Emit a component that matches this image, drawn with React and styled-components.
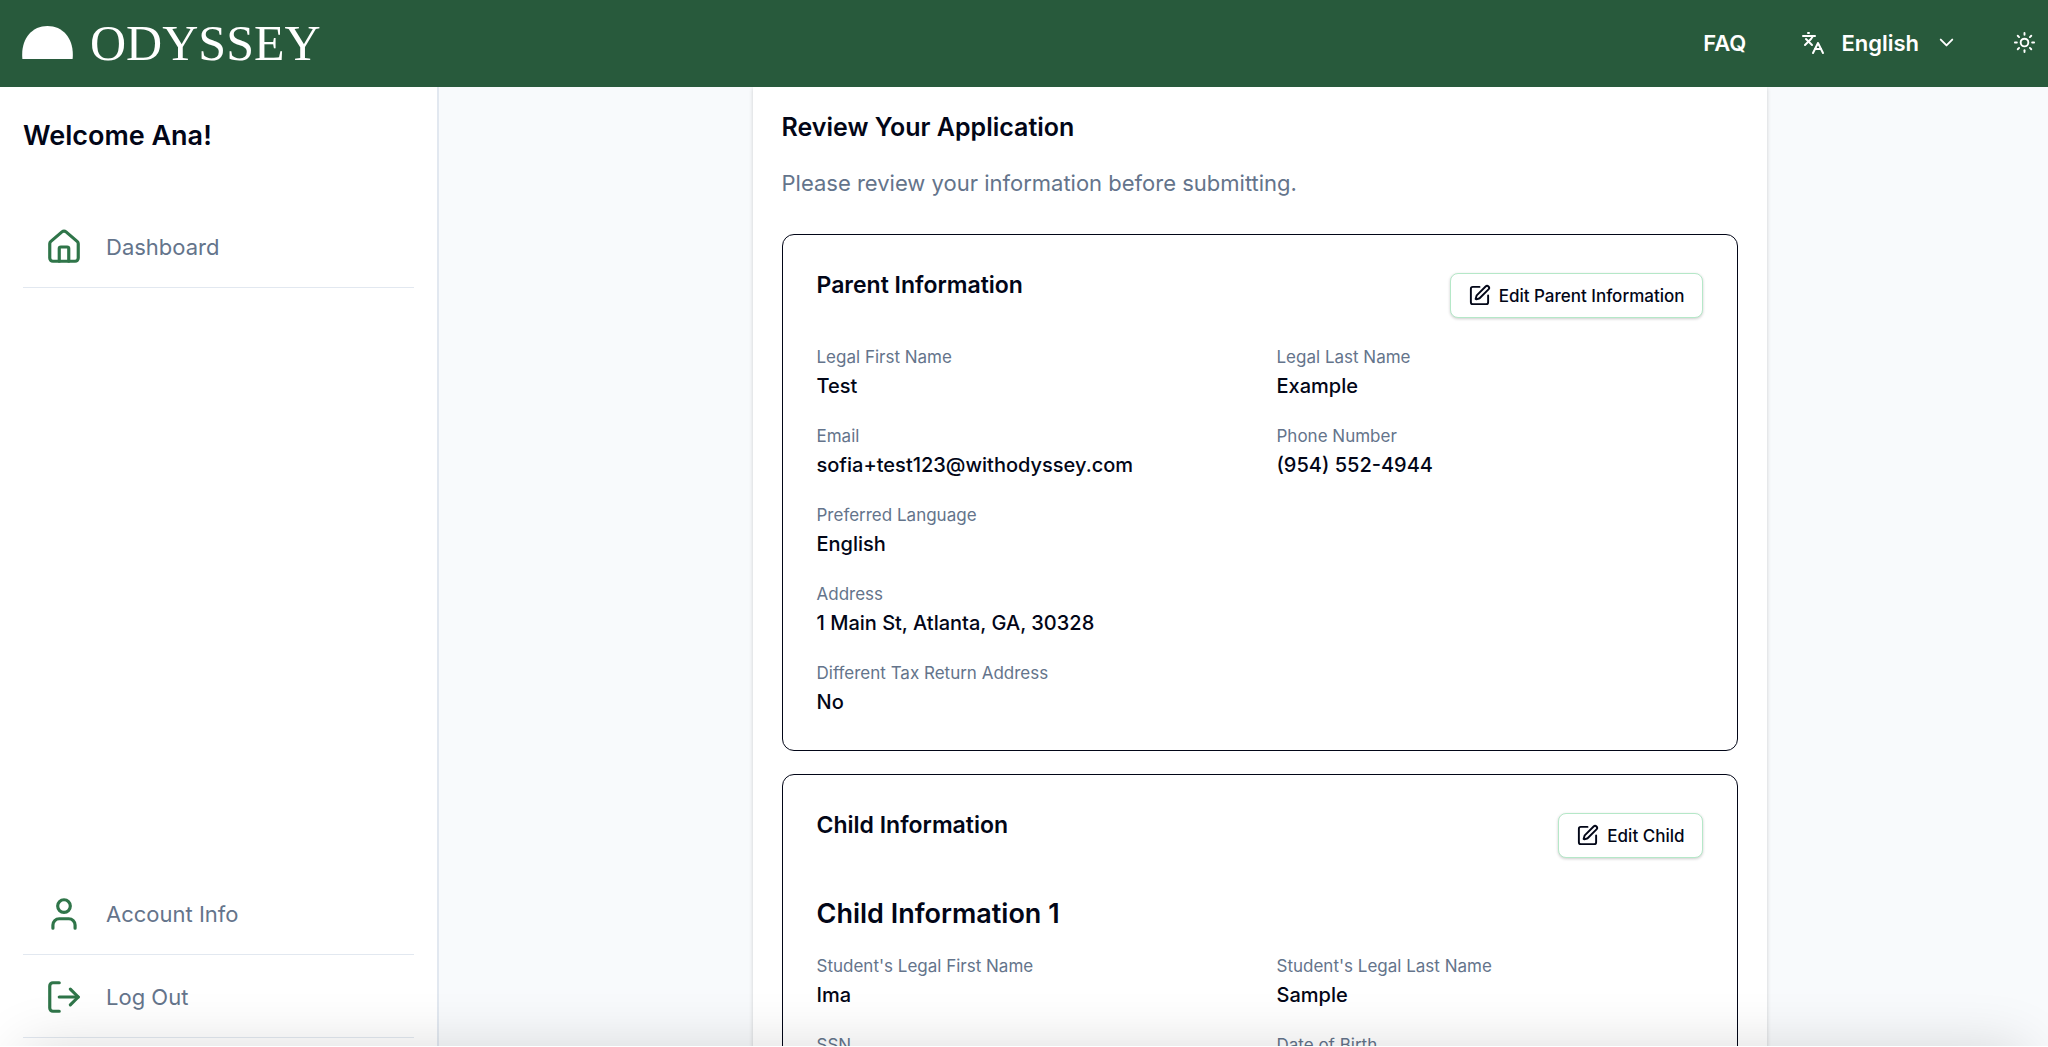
import React from "react";
import styled, { createGlobalStyle } from "styled-components";
import { House, User, LogOut, Languages, ChevronDown, Sun, SquarePen } from "lucide-react";

const GlobalStyle = createGlobalStyle`
  * {
    box-sizing: border-box;
  }

  body {
    margin: 0;
    overflow: hidden;
    background: #f8fafc;
    color: #020617;
    font-family: Inter, "Liberation Sans", sans-serif;
  }

  h1, h2, h3, p, dl, dd {
    margin: 0;
  }
`;

const parentFields = [
  [
    { label: "Legal First Name", value: "Test" },
    { label: "Legal Last Name", value: "Example" },
  ],
  [
    { label: "Email", value: "sofia+test123@withodyssey.com" },
    { label: "Phone Number", value: "(954) 552-4944" },
  ],
  [{ label: "Preferred Language", value: "English" }],
  [{ label: "Address", value: "1 Main St, Atlanta, GA, 30328" }],
  [{ label: "Different Tax Return Address", value: "No" }],
];

const childFields = [
  [
    { label: "Student's Legal First Name", value: "Ima" },
    { label: "Student's Legal Last Name", value: "Sample" },
  ],
  [{ label: "SSN" }, { label: "Date of Birth" }],
];

const Fields = ({ rows }) => (
  <FieldList>
    {rows.map((row) => (
      <FieldRow key={row[0].label}>
        {row.map((field) => (
          <div key={field.label}>
            <FieldLabel>{field.label}</FieldLabel>
            <FieldValue>{field.value}</FieldValue>
          </div>
        ))}
      </FieldRow>
    ))}
  </FieldList>
);

const NavItem = ({ icon: Icon, children }) => (
  <NavLink href="#">
    <Icon size={38} strokeWidth={2} color="#2f7549" />
    {children}
  </NavLink>
);

const App = () => {
  return (
    <Page>
      <GlobalStyle />
      <Header>
        <Logo href="#" aria-label="Odyssey">
          <svg width="51" height="33" viewBox="0 0 51 33" fill="#fff">
            <path d="M0.4 33C-1.500 14 9 0 25.500 0S52.500 14 50.600 33Z" />
          </svg>
          <LogoText>ODYSSEY</LogoText>
        </Logo>
        <HeaderNav>
          <HeaderLink href="#">FAQ</HeaderLink>
          <HeaderButton type="button">
            <Languages size={24} />
            English
            <ChevronDown size={23} strokeWidth={2} />
          </HeaderButton>
          <HeaderButton type="button" aria-label="Toggle theme">
            <Sun size={23} />
          </HeaderButton>
        </HeaderNav>
      </Header>

      <Body>
        <Sidebar>
          <Welcome>Welcome Ana!</Welcome>
          <SideNav>
            <NavItem icon={House}>Dashboard</NavItem>
          </SideNav>
          <SideNav>
            <NavItem icon={User}>Account Info</NavItem>
            <NavItem icon={LogOut}>Log Out</NavItem>
          </SideNav>
        </Sidebar>

        <Main>
          <Card>
            <Title>Review Your Application</Title>
            <Intro>Please review your information before submitting.</Intro>

            <Section>
              <SectionHeader>
                <SectionTitle>Parent Information</SectionTitle>
                <EditButton type="button">
                  <SquarePen size={23} />
                  Edit Parent Information
                </EditButton>
              </SectionHeader>
              <Fields rows={parentFields} />
            </Section>

            <Section>
              <SectionHeader>
                <SectionTitle>Child Information</SectionTitle>
                <EditButton type="button">
                  <SquarePen size={23} />
                  Edit Child
                </EditButton>
              </SectionHeader>
              <ChildTitle>Child Information 1</ChildTitle>
              <Fields rows={childFields} />
            </Section>
          </Card>
        </Main>
      </Body>
      <BottomBar />
    </Page>
  );
};

const Page = styled.div`
  display: flex;
  flex-direction: column;
  height: 100vh;
  overflow: hidden;
`;

const Header = styled.header`
  display: flex;
  align-items: center;
  justify-content: space-between;
  flex-shrink: 0;
  height: 87px;
  padding: 0 12px 2px 22px;
  background: #285a3c;
`;

const Logo = styled.a`
  display: flex;
  align-items: center;
  gap: 17px;
  color: #fff;
  text-decoration: none;
`;

const LogoText = styled.span`
  font-family: "Liberation Serif", serif;
  font-size: 50px;
  line-height: 48px;
`;

const HeaderNav = styled.nav`
  display: flex;
  align-items: center;
  gap: 55px;
`;

const HeaderLink = styled.a`
  color: #fff;
  font-size: 22px;
  font-weight: 600;
  text-decoration: none;
`;

const HeaderButton = styled.button`
  display: flex;
  align-items: center;
  gap: 16px;
  padding: 0;
  border: none;
  background: none;
  color: #fff;
  font: inherit;
  font-size: 22px;
  font-weight: 600;
`;

const Body = styled.div`
  display: flex;
  flex: 1;
  min-height: 0;
`;

const Sidebar = styled.aside`
  display: flex;
  flex-direction: column;
  flex-shrink: 0;
  width: 439px;
  padding: 29px 23px 8px;
  border-right: 2px solid #e2e8f0;
  background: #fff;
`;

const Welcome = styled.h2`
  margin-bottom: 49px;
  font-size: 27px;
  font-weight: 600;
  line-height: 40px;
`;

const SideNav = styled.nav`
  display: flex;
  flex-direction: column;

  &:last-child {
    margin-top: auto;
  }
`;

const NavLink = styled.a`
  display: flex;
  align-items: center;
  gap: 23px;
  height: 83px;
  padding: 2px 22px 0;
  border-bottom: 1px solid #e2e8f0;
  color: #64748b;
  font-size: 22px;
  text-decoration: none;
`;

const Main = styled.main`
  display: flex;
  justify-content: center;
  flex: 1;
  min-width: 0;
  padding-left: 32px;
  overflow: hidden;
`;

const Card = styled.section`
  display: flex;
  flex-direction: column;
  width: 100%;
  max-width: 1014px;
  height: max-content;
  padding: 22px 29px;
  background: #fff;
  box-shadow: 0 1px 4px rgba(0, 0, 0, 0.18);
`;

const Title = styled.h1`
  font-size: 25px;
  font-weight: 600;
  line-height: 36px;
`;

const Intro = styled.p`
  margin: 20px 0 33px;
  color: #64748b;
  font-size: 22px;
  line-height: 36px;
`;

const Section = styled.section`
  margin-bottom: 23px;
  padding: 38px 34px 32px;
  border: 1px solid #020617;
  border-radius: 12px;
`;

const SectionHeader = styled.div`
  display: flex;
  align-items: flex-start;
  justify-content: space-between;
  margin-bottom: 26px;
`;

const SectionTitle = styled.h2`
  font-size: 23px;
  font-weight: 600;
  line-height: 24px;
`;

const EditButton = styled.button`
  display: flex;
  align-items: center;
  gap: 8px;
  height: 45px;
  padding: 0 17px;
  border: 1px solid #b5e8c8;
  border-radius: 8px;
  background: #fff;
  box-shadow: 0 1px 3px rgba(0, 0, 0, 0.2);
  color: #020617;
  font: inherit;
  font-size: 17px;
  font-weight: 500;
`;

const ChildTitle = styled.h3`
  margin: 36px 0 19px;
  font-size: 27px;
  font-weight: 600;
  line-height: 40px;
`;

const FieldList = styled.div`
  display: flex;
  flex-direction: column;
  gap: 21px;
`;

const FieldRow = styled.dl`
  display: grid;
  grid-template-columns: 1fr 1fr;
  column-gap: 34px;
`;

const FieldLabel = styled.dt`
  color: #64748b;
  font-size: 17px;
  line-height: 26px;
`;

const FieldValue = styled.dd`
  font-size: 20px;
  font-weight: 500;
  line-height: 32px;
`;

// Tall bar that sits mostly below the fold, only its top edge and shadow show
const BottomBar = styled.footer`
  z-index: 1;
  flex-shrink: 0;
  height: 120px;
  margin-bottom: -119px;
  background: #fff;
  box-shadow: 0 -20px 60px -24px rgba(0, 0, 0, 0.16);
`;

export default App;
